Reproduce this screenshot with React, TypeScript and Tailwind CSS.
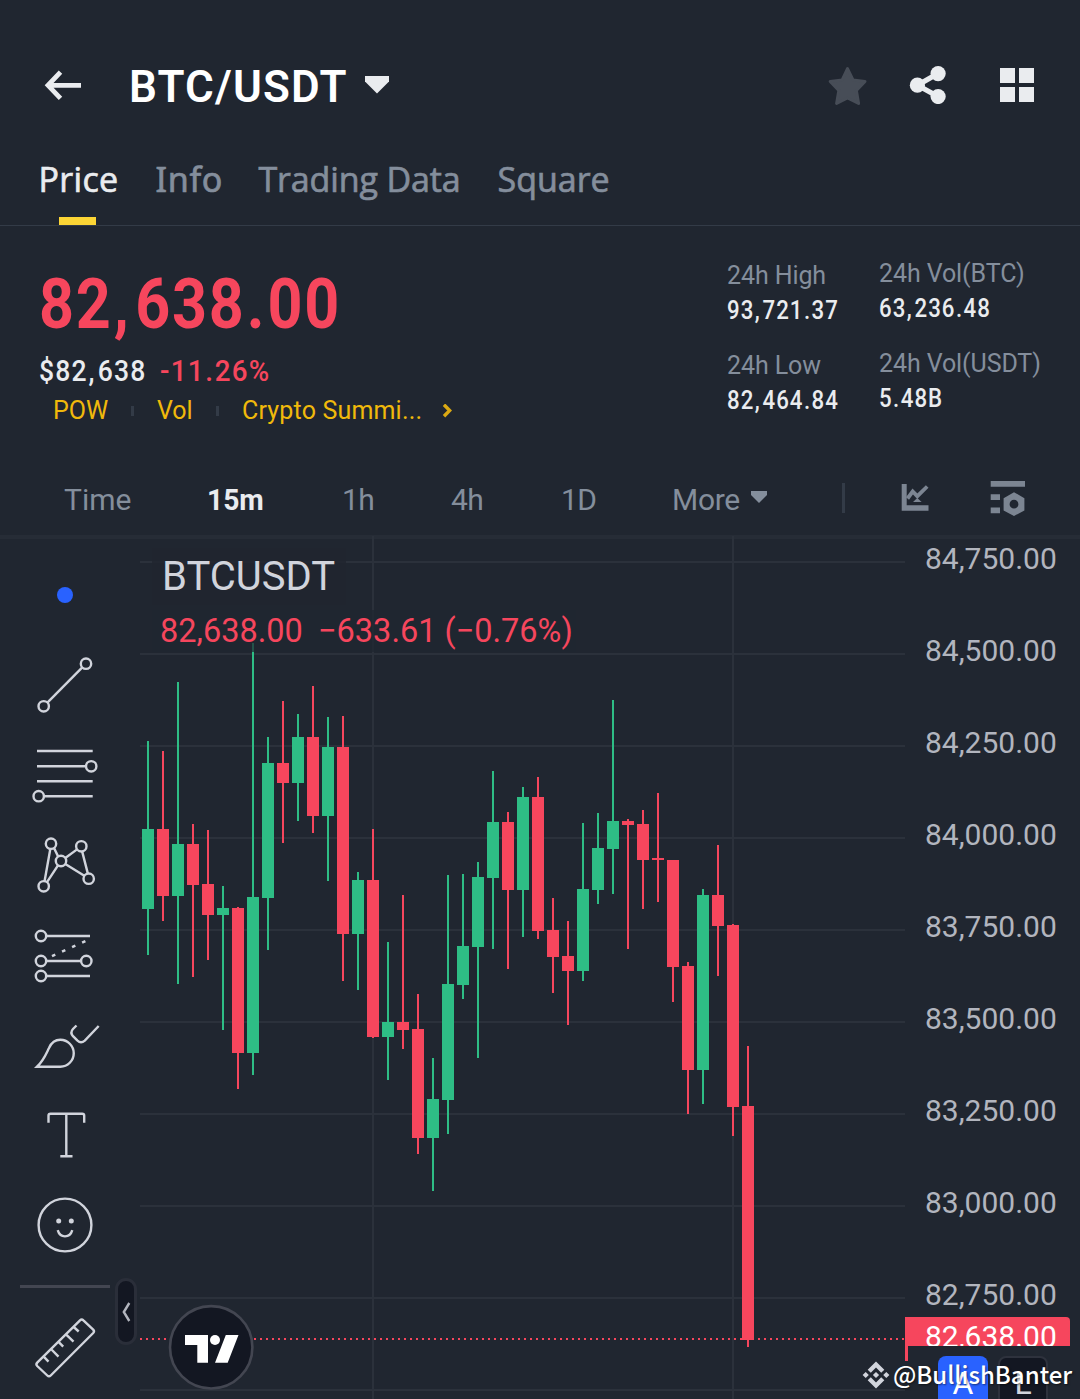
import React from 'react'

type Candle = [high: number, top: number, bottom: number, low: number, up: 0 | 1]

// y positions on the chart canvas, one candle every 15px
const candles: Candle[] = [
  [741, 829, 909, 955, 1],
  [751, 829, 896, 921, 0],
  [682, 844, 896, 984, 1],
  [824, 844, 885, 977, 0],
  [830, 884, 915, 960, 0],
  [886, 908, 915, 1030, 1],
  [907, 908, 1053, 1089, 0],
  [643, 897, 1053, 1075, 1],
  [737, 763, 898, 950, 1],
  [701, 763, 783, 843, 0],
  [714, 737, 783, 821, 1],
  [686, 737, 816, 833, 0],
  [717, 747, 816, 881, 1],
  [716, 747, 934, 981, 0],
  [872, 880, 934, 990, 1],
  [829, 880, 1037, 1038, 0],
  [942, 1022, 1037, 1080, 1],
  [895, 1022, 1030, 1049, 0],
  [994, 1029, 1138, 1154, 0],
  [1058, 1099, 1138, 1191, 1],
  [875, 984, 1100, 1134, 1],
  [874, 946, 985, 999, 1],
  [862, 877, 947, 1058, 1],
  [771, 822, 878, 949, 1],
  [812, 822, 890, 969, 0],
  [787, 797, 890, 937, 1],
  [777, 797, 931, 939, 0],
  [898, 930, 957, 993, 0],
  [921, 956, 971, 1025, 0],
  [823, 889, 971, 981, 1],
  [813, 848, 890, 904, 1],
  [700, 821, 849, 894, 1],
  [819, 821, 825, 949, 0],
  [810, 824, 860, 909, 0],
  [793, 858, 860, 902, 0],
  [860, 860, 967, 1002, 0],
  [962, 966, 1070, 1114, 0],
  [889, 895, 1070, 1104, 1],
  [845, 895, 926, 976, 0],
  [924, 925, 1107, 1136, 0],
  [1046, 1106, 1340, 1347, 0],
]

const gridRows = [561, 653, 745, 837, 929, 1021, 1113, 1205, 1297, 1389]
const gridCols = [372, 732]

const axisLabels = [
  '84,750.00',
  '84,500.00',
  '84,250.00',
  '84,000.00',
  '83,750.00',
  '83,500.00',
  '83,250.00',
  '83,000.00',
  '82,750.00',
]

// Narrow tabular figures with roomy punctuation
const Figures: React.FC<{ value: string; className: string }> = ({ value, className }) => (
  <span className={`inline-block origin-left whitespace-nowrap ${className}`}>
    {value.split('').map((char, i) => (
      <span key={i} className={char === ',' ? 'ml-[0.02em] mr-[0.08em]' : char === '.' ? 'mx-[0.02em]' : ''}>
        {char}
      </span>
    ))}
  </span>
)

const Stat: React.FC<{ label: string; value: string }> = ({ label, value }) => (
  <div className="h-[70px] text-[25px] leading-[35px] whitespace-nowrap">
    <div className="tracking-[-0.004em] text-[#848e9c]">{label}</div>
    <Figures value={value} className="scale-x-[0.89] tracking-[0.045em] font-medium text-[#eaecef]" />
  </div>
)

const Tool: React.FC<{ children: React.ReactNode }> = ({ children }) => (
  <svg
    viewBox="0 0 90 90"
    className="block h-[90px] w-[90px] shrink-0 fill-none stroke-[#d1d4dc] stroke-[2.4]"
  >
    {children}
  </svg>
)

const Header = () => (
  <header className="mt-[55px] flex h-[60px] items-center">
    <svg viewBox="0 0 40 32" className="ml-[43px] h-8 w-10 fill-none stroke-[#eaecef] stroke-[4.8]">
      <path d="M38 16.3H5M17.5 3.2L5 16.3L17.5 29.4" />
    </svg>
    <h1 className="ml-[46px] w-[236px] pt-1 text-[44px] leading-[60px] font-semibold tracking-[0.026em] text-white">
      BTC/USDT
    </h1>
    <svg viewBox="0 0 24 18" className="h-[18px] w-6 fill-[#eaecef]">
      <path d="M0 0H24V5.5L12 17.5L0 5.5Z" />
    </svg>
    <svg
      viewBox="0 0 40 42"
      className="mt-0.5 ml-[439px] h-[42px] w-10 fill-[#474d57] stroke-[#474d57] stroke-3"
      strokeLinejoin="round"
    >
      <path d="M19.5 3.6L25 14.9L37 16.4L28.4 25.4L30.6 38.4L19.5 33L8.6 38.4L10.8 25.4L2.2 16.4L14.2 14.9Z" />
    </svg>
    <svg viewBox="0 0 38 38" className="ml-[41px] h-[38px] w-[38px] fill-[#eaecef] stroke-[#eaecef]">
      <path d="M29 7.5L8.5 19.2L29 30.5" fill="none" strokeWidth="5.2" />
      <g stroke="none">
        <circle cx="29.1" cy="7.6" r="7.6" />
        <circle cx="8.4" cy="19.2" r="7.6" />
        <circle cx="29.1" cy="30.5" r="7.6" />
      </g>
    </svg>
    <div className="ml-[53px] grid grid-cols-[15px_15px] gap-1">
      <i className="h-[15px] bg-[#eaecef]" />
      <i className="h-[15px] bg-[#eaecef]" />
      <i className="h-[15px] bg-[#eaecef]" />
      <i className="h-[15px] bg-[#eaecef]" />
    </div>
  </header>
)

const Tabs = () => (
  <nav className="mt-[39px] flex h-[72px] border-b border-[#333b47] pl-[38.5px] font-['Open_Sans',sans-serif] text-[34px] leading-[51px] whitespace-nowrap text-[#848e9c] [-webkit-text-stroke:0.7px]">
    <div className="relative w-[117px] tracking-[0.01em] text-[#eaecef]">
      Price
      <span className="absolute bottom-0 left-[20.5px] h-2 w-[37px] bg-[#fcd535]" />
    </div>
    <div className="w-[103px] font-['Noto_Sans',sans-serif] tracking-[0.02em]">Info</div>
    <div className="w-[239px] tracking-[-0.004em]">Trading Data</div>
    <div>Square</div>
  </nav>
)

const Summary = () => (
  <section className="flex h-[234px]">
    <div className="w-[689px] pt-[38px]">
      <div className="pl-[39px] text-[71px] leading-[80px] font-bold text-[#f6465d]">
        <Figures value="82,638.00" className="scale-x-[0.86] tracking-[0.028em]" />
      </div>
      <div className="mt-[7px] flex h-10 pl-[38.5px] text-[30px] leading-10">
        <div className="w-[121.5px]">
          <Figures value="$82,638" className="scale-x-[0.885] tracking-[0.045em] font-medium text-[#eaecef]" />
        </div>
        <Figures value="-11.26%" className="scale-x-[0.925] tracking-[0.045em] font-medium text-[#f6465d]" />
      </div>
      <div className="mt-[5px] flex h-[30px] items-center pl-[53px] text-[25px] leading-[30px] whitespace-nowrap text-[#f0b90b]">
        <span className="w-[78px]">POW</span>
        <span className="h-2.5 w-[3px] bg-[#333b47]" />
        <span className="ml-[23px] w-[59px]">Vol</span>
        <span className="h-2.5 w-[3px] bg-[#333b47]" />
        <span className="ml-[23px] w-[200px] tracking-[0.007em]">Crypto Summi...</span>
        <svg viewBox="0 0 10 14" className="h-3.5 w-2.5 fill-none stroke-[#dba913] stroke-[3.4]">
          <path d="M2 .7L7.7 6.5L2 12.3" />
        </svg>
      </div>
    </div>
    <div className="flex w-[152px] flex-col gap-5 pt-8 pl-[38px]">
      <Stat label="24h High" value="93,721.37" />
      <Stat label="24h Low" value="82,464.84" />
    </div>
    <div className="flex flex-col gap-5 pt-[30px] pl-[38px]">
      <Stat label="24h Vol(BTC)" value="63,236.48" />
      <Stat label="24h Vol(USDT)" value="5.48B" />
    </div>
  </section>
)

const Intervals = () => (
  <div className="flex h-[75px] pt-5 pl-16 text-[30px] leading-10 whitespace-nowrap text-[#848e9c]">
    <span className="w-[143px]">Time</span>
    <span className="w-[135px]">
      <span className="inline-block origin-left scale-x-[0.94] font-bold text-[#eaecef]">15m</span>
    </span>
    <span className="w-[109px] tracking-[-0.02em]">1h</span>
    <span className="w-[110px] tracking-[-0.02em]">4h</span>
    <span className="w-[111px] tracking-[-0.02em]">1D</span>
    <span className="w-[79px] tracking-[-0.01em]">More</span>
    <svg viewBox="0 0 16 12" className="mt-[11px] h-3 w-4 fill-[#848e9c]">
      <path d="M0 0H16V4L8 12L0 4Z" />
    </svg>
    <span className="mt-[3px] ml-[75px] h-[30px] w-[3px] bg-[#333b47]" />
    <svg viewBox="0 0 28 28" className="mt-[3px] ml-14 h-7 w-7 fill-[#7c8592]">
      <path d="M.7 1H5.7V22.3H27.5V27.8H.7Z" />
      <path d="M6.5 15.5L11.7 8.5L16.3 13.2L26.2 3.5" className="fill-none stroke-[#7c8592] stroke-[3.8]" />
      <path d="M12 19L16.3 15L20.6 19Z" />
    </svg>
    <svg viewBox="0 0 36 36" className="ml-[61px] h-9 w-9 fill-[#7c8592]">
      <path d="M.7 1H35V6.8H.7ZM.7 14.3H10V20H.7ZM.7 27.6H10V33.3H.7Z" />
      <path fillRule="evenodd" d="M24 12.2L34.4 18.2V30.4L24 36L13.6 30.4V18.2ZM24 19.8a4.4 4.4 0 1 0 0 8.8a4.4 4.4 0 1 0 0-8.8Z" />
    </svg>
  </div>
)

const Toolbar = () => (
  <aside className="relative w-[140px] shrink-0 pl-5">
    <div className="mt-12 ml-[37px] h-4 w-4 rounded-full bg-[#2962ff]" />
    <div className="mt-[37px]">
      <Tool>
        <circle cx="66" cy="23.7" r="5.2" />
        <circle cx="23.7" cy="66.3" r="5.2" />
        <path d="M62.3 27.4L27.4 62.6" />
      </Tool>
      <Tool>
        <path d="M17 21H72.7M17 36.3H66M17 51.3H72.7M24 66.2H72.7" />
        <circle cx="71.2" cy="36.3" r="5.2" />
        <circle cx="18.7" cy="66.2" r="5.2" />
      </Tool>
      <Tool>
        <circle cx="31" cy="23.7" r="5.2" />
        <circle cx="61.3" cy="26.3" r="5.2" />
        <circle cx="41" cy="41" r="5.2" />
        <circle cx="23.7" cy="66.3" r="5.2" />
        <circle cx="68.7" cy="58.7" r="5.2" />
        <path d="M30.3 29L24.6 61M34 28L38.2 36.6M57.1 29.4L45.3 38M45.3 44L64.3 55.8M62.2 31.6L67.8 53.4M38 45.3L27 62.2" />
      </Tool>
      <Tool>
        <circle cx="21" cy="26" r="5.2" />
        <circle cx="21" cy="51" r="5.2" />
        <circle cx="21" cy="66" r="5.2" />
        <circle cx="66.3" cy="51" r="5.2" />
        <path d="M26.2 26H70M26.2 51H61M26.2 66H70" />
        <path d="M32 46.1L67 30.4" strokeDasharray="3.6 7.4" strokeWidth="2.6" />
      </Tool>
      <Tool>
        <path d="M17 66.7C24 60 26 54 29 48C31.5 42.5 36 39.8 40.3 39.8A13.4 13.4 0 0 1 40.3 66.7Z" />
        <path d="M56.5 25.5L53 29Q49.8 32.5 53 36.2L57.5 40.7Q61 43.8 64.8 40.6L78.7 26" />
      </Tool>
      <Tool>
        <path d="M28.5 32.7V25.5Q28.5 23.7 30.5 23.7H62.2Q64.2 23.7 64.2 25.5V32.7M46.3 23.7V66M40.3 66.2H52.5" />
      </Tool>
      <Tool>
        <circle cx="45" cy="45" r="26.4" />
        <path d="M37.7 50.2Q39.5 56.4 45 56.4Q50.5 56.4 52.3 50.2" />
        <g className="fill-[#d1d4dc] stroke-none">
          <circle cx="38.7" cy="41" r="2.5" />
          <circle cx="51.3" cy="41" r="2.5" />
        </g>
      </Tool>
    </div>
    <div className="mt-[15px] mb-3.5 h-[3px] w-[90px] bg-[#434651]" />
    <Tool>
      <path
        strokeLinejoin="round"
        d="M60 18.3Q61.7 16.6 63.4 18.3L73.2 27.6Q74.8 29.3 73.2 31L30.7 73.5Q29 75.2 27.3 73.5L17.2 64Q15.6 62.3 17.2 60.6ZM23.7 54.7L28.5 59.7M31 47L38.5 54.7M38.3 39.7L43.2 44.7M46 32.3L53.5 39.7M53.7 25L58.7 29.5"
      />
    </Tool>
    <div className="absolute top-[739px] left-[115px] flex h-[67px] w-[22px] items-center justify-center rounded-full border-[3px] border-[#2a2e39] bg-[#131722]">
      <svg viewBox="0 0 10 20" className="h-5 w-2.5 fill-none stroke-[#b2b5be] stroke-[2.4]">
        <path d="M8.3 1L2.8 10L8.3 19" />
      </svg>
    </div>
  </aside>
)

const Chart = () => (
  <div className="relative w-[765px] shrink-0">
    <svg viewBox="140 535 765 864" className="absolute -top-1 left-0 h-[864px] w-[765px]" shapeRendering="crispEdges">
      {gridRows.map((y) => (
        <rect key={y} x="140" y={y} width="765" height="2" fill="#2b313b" />
      ))}
      {gridCols.map((x) => (
        <rect key={x} x={x} y="536" width="2" height="863" fill="#2b313b" />
      ))}
      {candles.map(([high, top, bottom, low, up], i) => (
        <g key={i} fill={up ? '#2ebd85' : '#f6465d'}>
          <rect x={147 + i * 15} y={high} width="2" height={low - high} />
          <rect x={142 + i * 15} y={top} width="12" height={bottom - top} />
        </g>
      ))}
      <path d="M140 1339H905" stroke="#f6465d" strokeWidth="2" strokeDasharray="2 4" />
    </svg>
    <div className="relative pt-[9px] pl-3">
      <div className="h-[57px] w-[194px] bg-[#202630]/80 pl-2.5 text-[40px] leading-[57px] text-[#d1d4dc]">BTCUSDT</div>
      <div className="mt-[5px] flex h-[42px] w-[424px] bg-[#202630]/70 pl-2 text-[32.5px] leading-[42px] whitespace-nowrap text-[#f6465d]">
        <span className="w-[158px]">82,638.00</span>
        <span>−633.61 (−0.76%)</span>
      </div>
    </div>
    <svg viewBox="0 0 86 86" className="absolute top-[765px] left-7 h-[86px] w-[86px]">
      <circle cx="43.2" cy="43.3" r="41.2" fill="#131722" stroke="#434651" strokeWidth="2.6" />
      <g fill="#fff">
        <path d="M17 31H40V58.7H29.3V41H17ZM57.8 31H70.5L59.7 58.7H47Z" />
        <circle cx="47" cy="36" r="5" />
      </g>
    </svg>
  </div>
)

const PriceAxis = () => (
  <div className="relative w-[175px] text-[30px] text-[#b2b5be]">
    <div className="-mt-[26px] pl-5">
      {axisLabels.map((label) => (
        <div key={label} className="h-[92px] leading-[92px]">
          {label}
        </div>
      ))}
    </div>
    <div className="absolute top-[778px] left-0 h-11 w-[3px] bg-[#f6465d]" />
    <div className="absolute top-[778px] left-0 h-[29px] w-[165px] overflow-hidden rounded-tr bg-[#f6465d] pl-5 leading-[39px] text-white">
      82,638.00
    </div>
    <div className="absolute top-[817px] left-[33px] h-[50px] w-[50px] rounded-lg bg-[#2962ff] text-center text-[32px] leading-[55px] text-white">
      A
    </div>
    <div className="absolute top-[817px] left-[93px] h-[50px] w-[50px] rounded-lg border-2 border-[#2e323d] bg-[#131722] text-center text-[32px] leading-[51px] text-[#d1d4dc]">
      L
    </div>
  </div>
)

const Watermark = () => (
  <div className="absolute right-2 bottom-[5px] flex h-10 items-center">
    <svg viewBox="0 0 28 28" className="mt-px mr-[3px] h-7 w-7 fill-[#d1d4dc]">
      <path d="M14 .4L22.3 8.7L19.2 11.8L14 6.6L8.8 11.8L5.7 8.7ZM14 27.6L22.3 19.3L19.2 16.2L14 21.4L8.8 16.2L5.7 19.3Z" />
      <path d="M14 10.9L17.1 14L14 17.1L10.9 14ZM3.7 10.9L6.8 14L3.7 17.1L.6 14ZM24.3 10.9L27.4 14L24.3 17.1L21.2 14Z" />
    </svg>
    <span className="w-[179px] font-['Noto_Sans_CJK_SC',sans-serif] text-[24px] leading-10 font-medium whitespace-nowrap text-white [text-shadow:1px_1px_2px_rgba(0,0,0,0.5)]">
      @BullishBanter
    </span>
  </div>
)

export default function App() {
  return (
    <div className="relative flex h-[1399px] w-[1080px] flex-col overflow-hidden bg-[#202630] font-['Roboto',sans-serif]">
      <Header />
      <Tabs />
      <Summary />
      <Intervals />
      <div className="h-1 shrink-0 bg-[#262c36]" />
      <main className="flex h-[860px] shrink-0">
        <Toolbar />
        <Chart />
        <PriceAxis />
      </main>
      <Watermark />
    </div>
  )
}
